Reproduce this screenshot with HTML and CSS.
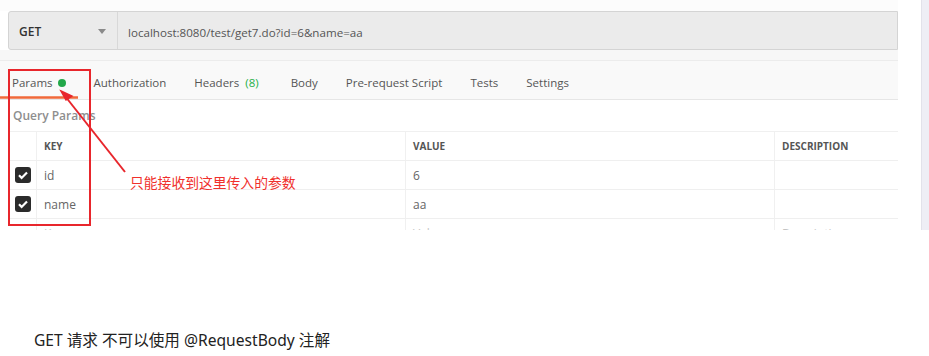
FILE: index.html
```html
<!DOCTYPE html>
<html lang="zh-CN">
<head>
  <meta charset="UTF-8" />
  <title>GET 请求参数</title>
  <link rel="stylesheet" href="styles.css">
</head>
<body>
  <div class="page">
    <div class="shot">
      <div class="top-strip"></div>

      <div class="url-bar">
        <div class="method">
          <span>GET</span>
          <svg class="caret" width="8" height="5" viewBox="0 0 8 5"><path d="M0 0h8L4 5z" fill="#8a8a8a"/></svg>
        </div>
        <div class="url">localhost:8080/test/get7.do?id=6&amp;name=aa</div>
      </div>

      <div class="under-bar"></div>

      <div class="tabs">
        <span class="tab">Params <i class="dot"></i></span>
        <span class="tab">Authorization</span>
        <span class="tab headers">Headers <em>(8)</em></span>
        <span class="tab">Body</span>
        <span class="tab">Pre-request Script</span>
        <span class="tab">Tests</span>
        <span class="tab">Settings</span>
      </div>

      <div class="query-title">Query Params</div>

      <div class="table">
        <div class="row head">
          <div class="cell check"></div>
          <div class="cell key">KEY</div>
          <div class="cell value">VALUE</div>
          <div class="cell desc">DESCRIPTION</div>
        </div>
        <div class="row">
          <div class="cell check"><span class="box"><svg width="16" height="16" viewBox="0 0 16 16"><path d="M4 8.3l2.6 2.6L12 5.4" fill="none" stroke="#fff" stroke-width="2.2"/></svg></span></div>
          <div class="cell key">id</div>
          <div class="cell value">6</div>
          <div class="cell desc"></div>
        </div>
        <div class="row">
          <div class="cell check"><span class="box"><svg width="16" height="16" viewBox="0 0 16 16"><path d="M4 8.3l2.6 2.6L12 5.4" fill="none" stroke="#fff" stroke-width="2.2"/></svg></span></div>
          <div class="cell key">name</div>
          <div class="cell value">aa</div>
          <div class="cell desc"></div>
        </div>
        <div class="row placeholder">
          <div class="cell check"></div>
          <div class="cell key">Key</div>
          <div class="cell value">Value</div>
          <div class="cell desc">Description</div>
        </div>
      </div>

      <div class="scrollbar"></div>

      <!-- red annotation drawn over the screenshot -->
      <svg class="marks" width="929" height="230" viewBox="0 0 929 230">
        <line x1="0" y1="97.5" x2="78" y2="97.5" stroke="#f0693a" stroke-width="2.5"/>
        <rect x="9" y="70" width="81" height="155" fill="none" stroke="#e8262c" stroke-width="2"/>
        <line x1="125" y1="172" x2="65" y2="96" stroke="#e8262c" stroke-width="2"/>
        <path d="M61 91l11 5-6 4z" fill="#e8262c" stroke="#e8262c" stroke-width="1.5"/>
      </svg>
      <span class="note">只能接收到这里传入的参数</span>
    </div>

    <p class="caption">GET 请求 不可以使用 @RequestBody 注解</p>
  </div>
</body>
</html>
```

FILE: styles.css
```css
body {
  margin: 0;
  background: #fff;
  font-family: 'Open Sans', 'Noto Sans', sans-serif;
}

.page {
  width: 929px;
  height: 356px;
  overflow: hidden;
}

.shot {
  position: relative;
  height: 230px;
  overflow: hidden;
}

.top-strip {
  height: 11px;
  width: 898px;
  background: #fcfcfc;
}

.url-bar {
  display: flex;
  margin-left: 8px;
  width: 888px;
  height: 37px;
  background: #ebebeb;
  border: 1px solid #d4d4d4;
  border-radius: 3px 0 0 3px;
}

.method {
  width: 98px;
  padding-left: 10px;
  padding-top: 2px;
  display: flex;
  align-items: center;
  justify-content: space-between;
  border-right: 1px solid #d8d8d8;
  font-size: 12px;
  font-weight: 600;
  color: #333;
}

.caret {
  margin-right: 11px;
}

.url {
  display: flex;
  align-items: center;
  padding-left: 10px;
  padding-top: 3px;
  font-size: 11.6px;
  color: #555;
}

.under-bar {
  width: 898px;
  height: 10px;
  background: #f7f7f7;
  border-bottom: 1px solid #ececec;
}

.tabs {
  display: flex;
  align-items: center;
  gap: 28px;
  width: 886px;
  height: 33px;
  padding: 5px 0 0 12px;
  background: #f9f9f9;
  border-bottom: 1px solid #e6e6e6;
  font-size: 11.5px;
  color: #555;
}

.tab em {
  font-style: normal;
  margin-left: 3px;
  color: #26b047;
}

.tab.headers {
  margin-right: 4px;
}

.dot {
  display: inline-block;
  width: 8px;
  height: 8px;
  margin-left: 2px;
  border-radius: 50%;
  background: #23a84a;
  vertical-align: 0;
}

.query-title {
  padding: 7px 0 0 13px;
  height: 24px;
  font-size: 12px;
  font-weight: 600;
  color: #8e8e8e;
}

.table {
  width: 890px;
  margin-left: 8px;
  border-top: 1px solid #f0f0f0;
}

.row {
  display: flex;
  height: 28px;
  border-bottom: 1px solid #efefef;
}

.cell {
  display: flex;
  align-items: center;
  padding-left: 7px;
  font-size: 12px;
  color: #666;
}

.cell.check {
  width: 28px;
  padding-left: 0;
  justify-content: center;
  border-right: 1px solid #f0f0f0;
}

.cell.key {
  width: 361px;
  border-right: 1px solid #f0f0f0;
}

.cell.value {
  width: 361px;
  border-right: 1px solid #f0f0f0;
}

.cell.desc {
  flex: 1;
}

.head .cell {
  font-size: 10px;
  font-weight: 700;
  color: #555;
}

.placeholder .cell {
  color: #c4c4c4;
  align-items: flex-start;
  padding-top: 6px;
}

.box {
  display: inline-block;
  width: 16px;
  height: 16px;
  border-radius: 3px;
  background: #2b2b2b;
  margin-left: 2px;
}

.box svg {
  display: block;
}

.scrollbar {
  position: absolute;
  top: 0;
  right: 0;
  width: 7px;
  height: 230px;
  background: #eeeef5;
  border-left: 1px solid #e2e2ea;
}

.marks {
  position: absolute;
  top: 0;
  left: 0;
}

.note {
  position: absolute;
  left: 130px;
  top: 172px;
  font-family: 'Noto Sans CJK SC', sans-serif;
  font-size: 13.8px;
  color: #f0302c;
}

.caption {
  margin: 98px 0 0 34px;
  font-family: 'Noto Sans', 'Noto Sans CJK SC', sans-serif;
  font-size: 15.6px;
  color: #222;
}
```
